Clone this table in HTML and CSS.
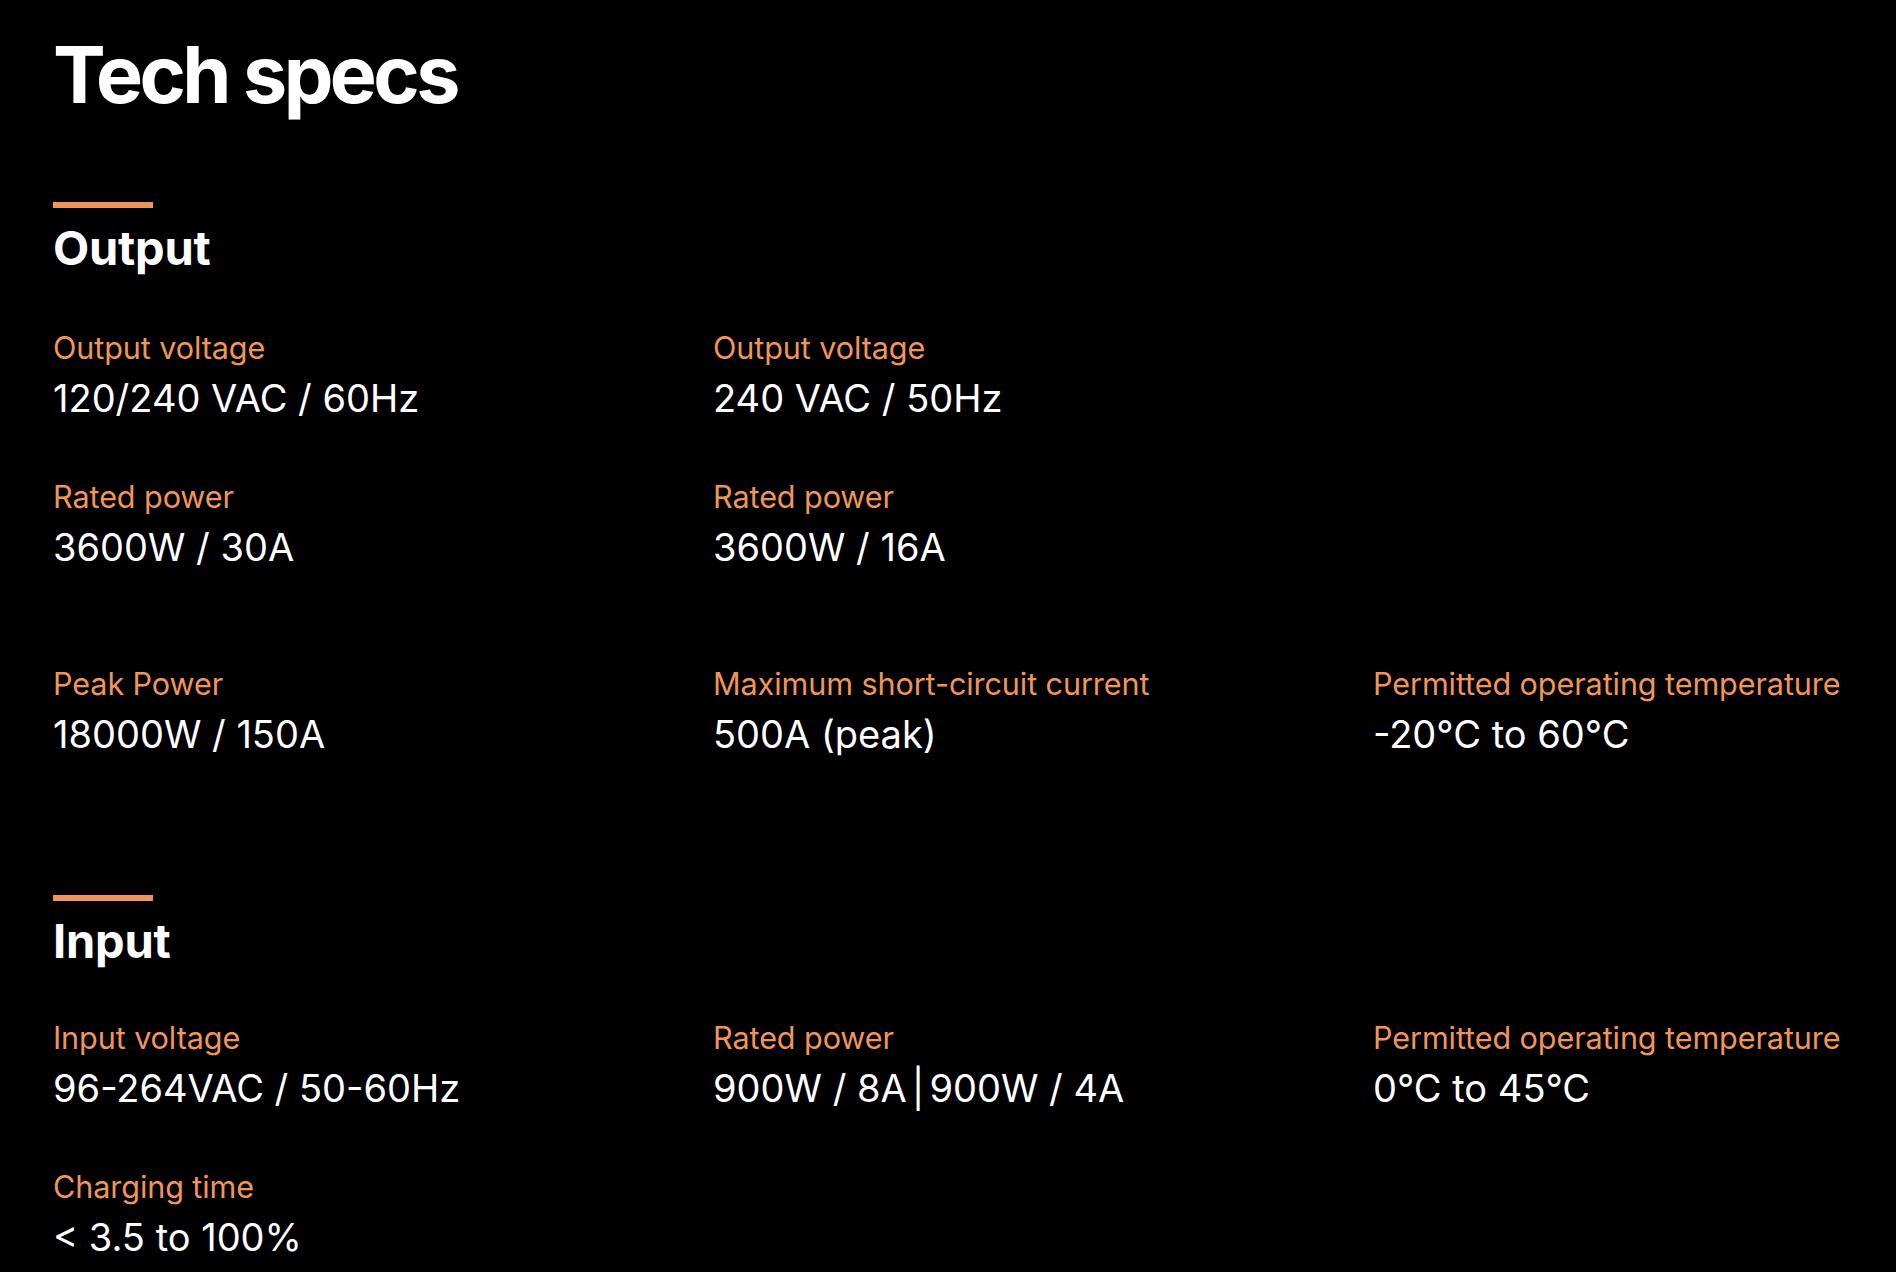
FILE: index.html
```html
<!DOCTYPE html>
<html lang="en">
<head>
<meta charset="utf-8">
<title>Tech specs</title>
<link rel="stylesheet" href="styles.css">
</head>
<body>
<main class="page">
  <h1 class="title">Tech specs</h1>

  <section class="section section-output">
    <div class="bar"></div>
    <h2 class="section-title">Output</h2>
    <div class="spec-grid">
      <div class="spec">
        <div class="spec-label">Output voltage</div>
        <div class="spec-value">120/240 VAC / 60Hz</div>
      </div>
      <div class="spec">
        <div class="spec-label">Output voltage</div>
        <div class="spec-value">240 VAC / 50Hz</div>
      </div>
      <div class="spec spec-empty"></div>
      <div class="spec">
        <div class="spec-label">Rated power</div>
        <div class="spec-value">3600W / 30A</div>
      </div>
      <div class="spec">
        <div class="spec-label">Rated power</div>
        <div class="spec-value">3600W / 16A</div>
      </div>
      <div class="spec spec-empty"></div>
    </div>
    <div class="spec-grid spec-grid-next">
      <div class="spec">
        <div class="spec-label">Peak Power</div>
        <div class="spec-value">18000W / 150A</div>
      </div>
      <div class="spec">
        <div class="spec-label">Maximum short-circuit current</div>
        <div class="spec-value">500A (peak)</div>
      </div>
      <div class="spec">
        <div class="spec-label">Permitted operating temperature</div>
        <div class="spec-value">-20°C to 60°C</div>
      </div>
    </div>
  </section>

  <section class="section section-input">
    <div class="bar"></div>
    <h2 class="section-title">Input</h2>
    <div class="spec-grid">
      <div class="spec">
        <div class="spec-label">Input voltage</div>
        <div class="spec-value">96-264VAC / 50-60Hz</div>
      </div>
      <div class="spec">
        <div class="spec-label">Rated power</div>
        <div class="spec-value">900W / 8A<span class="pipe">|</span>900W / 4A</div>
      </div>
      <div class="spec">
        <div class="spec-label">Permitted operating temperature</div>
        <div class="spec-value">0°C to 45°C</div>
      </div>
      <div class="spec">
        <div class="spec-label">Charging time</div>
        <div class="spec-value">&lt; 3.5 to 100%</div>
      </div>
    </div>
  </section>
</main>
</body>
</html>
```

FILE: styles.css
```css
* {
  box-sizing: border-box;
}

html, body {
  margin: 0;
  padding: 0;
  background: #000;
}

body {
  color: #fff;
  font-family: Inter, "Noto Sans", "Liberation Sans", sans-serif;
  overflow: hidden;
}

.page {
  padding: 35px 40px 0 53px;
}

.title {
  margin: 0;
  font-size: 79px;
  line-height: 1;
  font-weight: 700;
  letter-spacing: -3.6px;
}

.section-output {
  margin-top: 88px;
}

.section-input {
  margin-top: 138px;
}

.bar {
  width: 100px;
  height: 6px;
  background: #f0955a;
}

.section-title {
  margin: 16px 0 0 0;
  font-size: 47px;
  line-height: 1;
  font-weight: 700;
  letter-spacing: -0.2px;
}

.spec-grid {
  display: grid;
  grid-template-columns: 660px 660px 1fr;
  row-gap: 58px;
  margin-top: 59px;
}

.section-input .spec-grid {
  margin-top: 56px;
}

.spec-grid-next {
  margin-top: 96px;
}

.spec {
  display: flex;
  flex-direction: column;
  gap: 9px;
  white-space: nowrap;
}

.spec-label {
  color: #f0955a;
  font-size: 30.6px;
  line-height: 35px;
  font-weight: 400;
  letter-spacing: -0.1px;
}

.spec-value {
  color: #fff;
  font-size: 38px;
  line-height: 46px;
  font-weight: 400;
  padding-top: 1px;
}

.pipe {
  margin: 0 5px;
}
```
